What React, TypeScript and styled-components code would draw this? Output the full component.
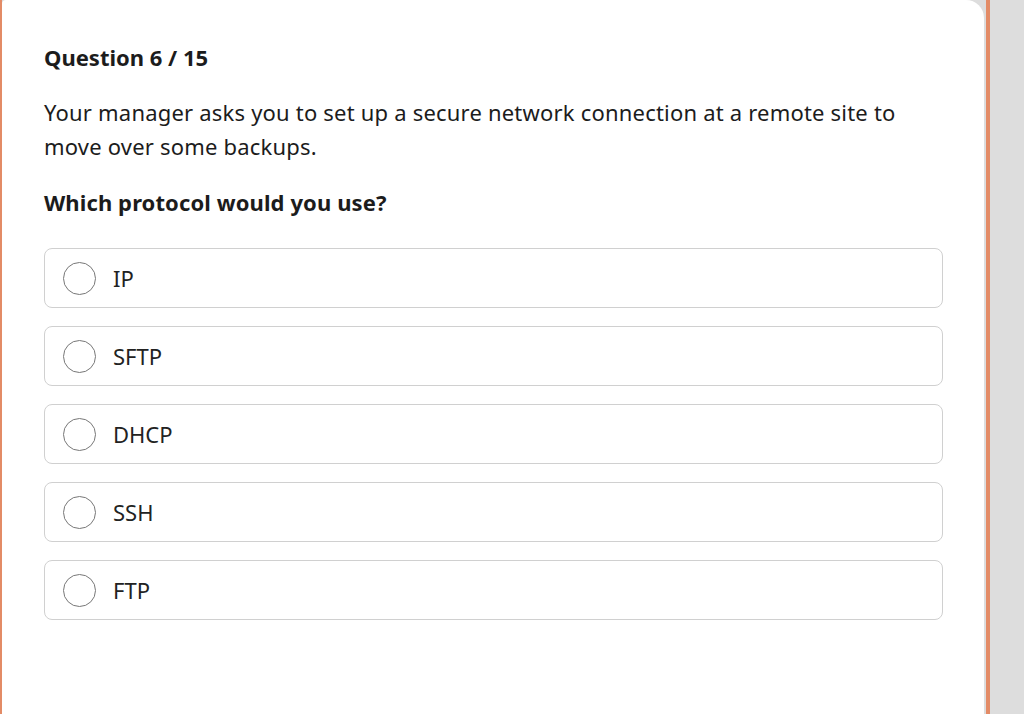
import React from "react";
import styled, { createGlobalStyle } from "styled-components";

const GlobalStyle = createGlobalStyle`
  html, body {
    margin: 0;
    padding: 0;
    background: #dddddd;
  }
  body {
    font-family: "Noto Sans", "Open Sans", sans-serif;
    color: #1c1c1c;
  }
`;

const Page = styled.div`
  display: flex;
  height: 714px;
  overflow: hidden;
  background: #dddddd;
`;

const Stripe = styled.div<{ width: number }>`
  flex: 0 0 ${(p) => p.width}px;
  background: #e38b66;
`;

const Card = styled.main`
  flex: 0 0 982px;
  background: #ffffff;
  border-radius: 4px 18px 0 0;
  padding: 44px 41px 0 42px;
  box-sizing: border-box;
`;

const Gutter = styled.div`
  flex: 1;
  display: flex;
  padding-left: 2px;
`;

const Counter = styled.h2`
  margin: 0;
  font-size: 22px;
  line-height: 26px;
  font-weight: 700;
`;

const Prompt = styled.p`
  margin: 25px 0 0;
  font-size: 22px;
  letter-spacing: 0.2px;
  line-height: 34px;
  font-weight: 400;
`;

const Ask = styled.p`
  margin: 22px 0 0;
  font-size: 22px;
  letter-spacing: 0.1px;
  line-height: 34px;
  font-weight: 700;
`;

const Options = styled.ul`
  list-style: none;
  margin: 29px 0 0;
  padding: 0;
  display: flex;
  flex-direction: column;
  gap: 18px;
`;

const Option = styled.li`
  display: flex;
  align-items: center;
  gap: 17px;
  height: 60px;
  box-sizing: border-box;
  padding: 0 18px;
  border: 1.5px solid #d0d0d0;
  border-radius: 8px;
  background: #fff;
  cursor: pointer;
`;

const Radio = styled.span`
  width: 33px;
  height: 33px;
  box-sizing: border-box;
  border: 1.5px solid #777777;
  border-radius: 50%;
  flex: 0 0 auto;
`;

const Label = styled.span`
  font-size: 22px;
  line-height: 26px;
  color: #222;
`;

const answers = ["IP", "SFTP", "DHCP", "SSH", "FTP"];

export default function App() {
  return (
    <>
      <GlobalStyle />
      <Page>
        <Stripe width={2} />
        <Card>
          <Counter>Question 6 / 15</Counter>
          <Prompt>
            Your manager asks you to set up a secure network connection at a
            remote site to move over some backups.
          </Prompt>
          <Ask>Which protocol would you use?</Ask>
          <Options>
            {answers.map((a) => (
              <Option key={a}>
                <Radio />
                <Label>{a}</Label>
              </Option>
            ))}
          </Options>
        </Card>
        <Gutter>
          <Stripe width={4} />
        </Gutter>
      </Page>
    </>
  );
}
